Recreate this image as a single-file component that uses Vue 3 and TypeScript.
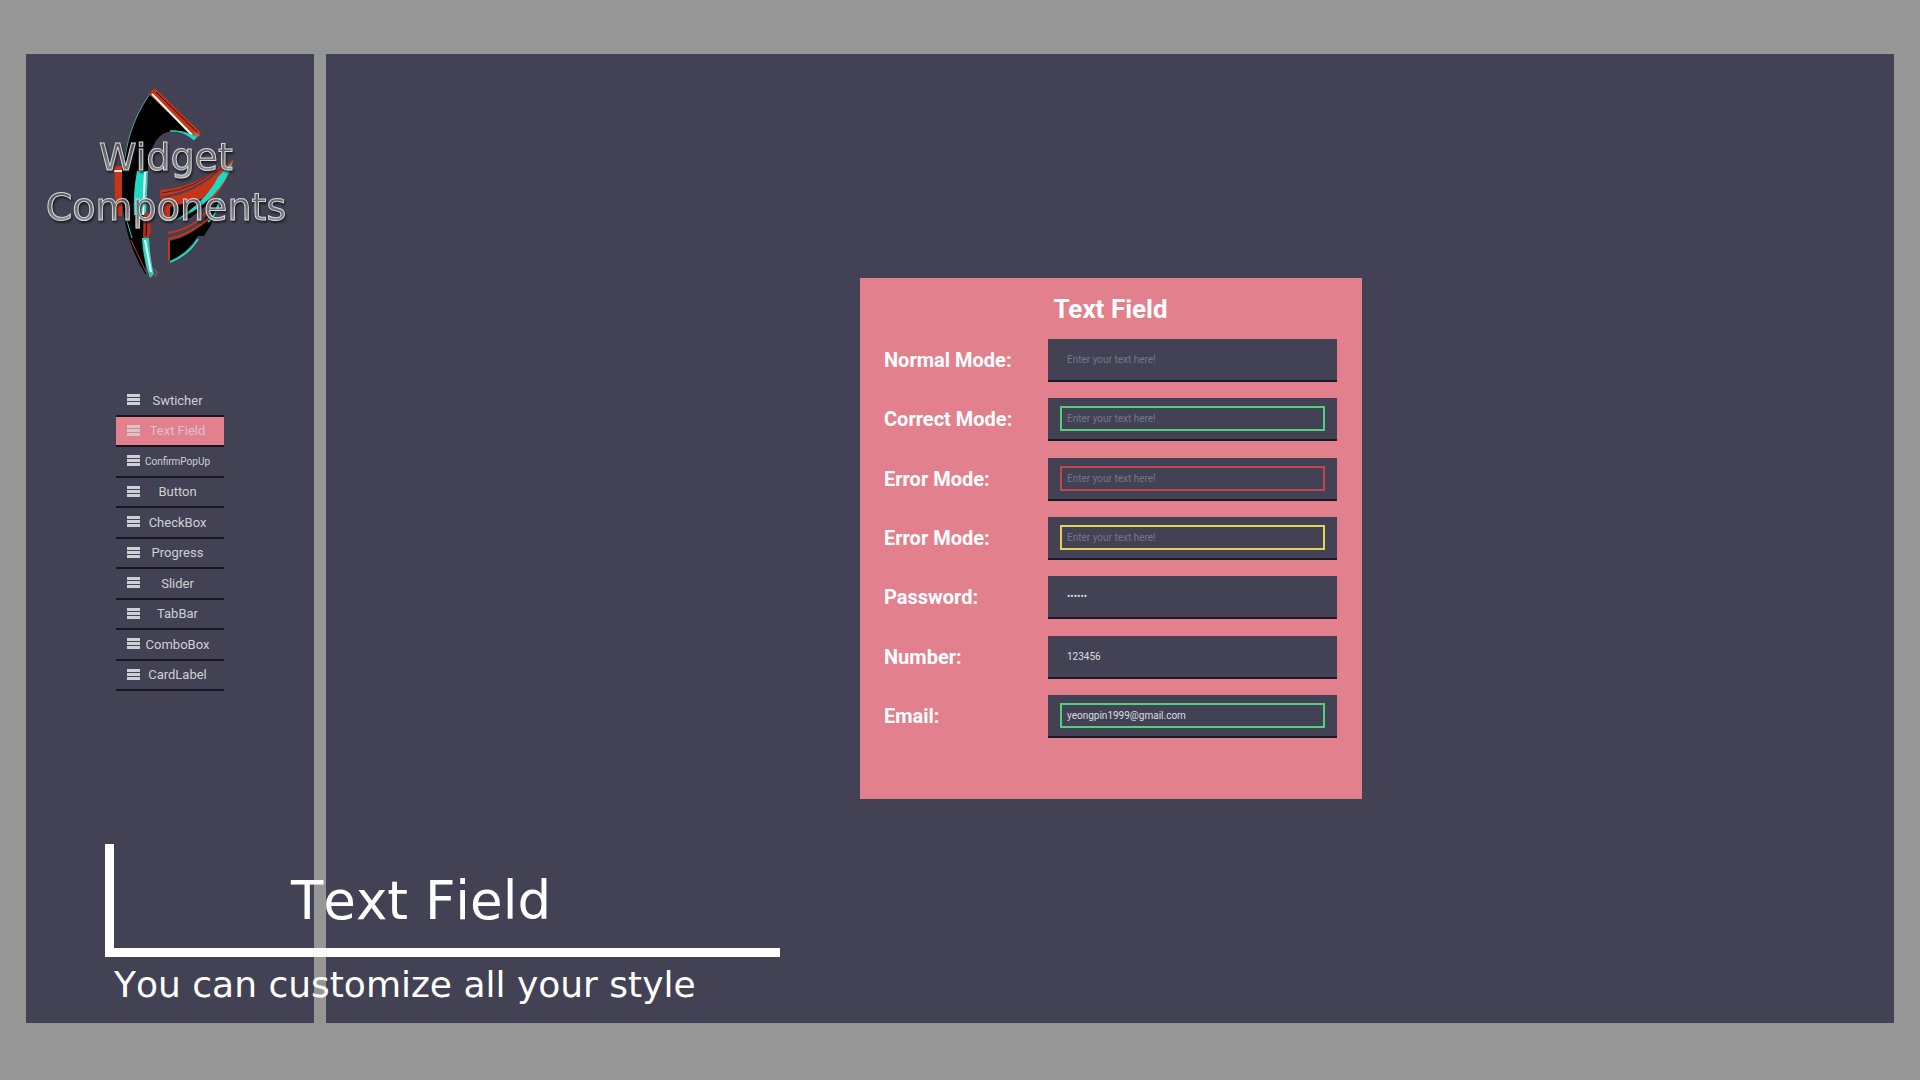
<script setup lang="ts">
interface NavItem { label: string; small?: boolean }
interface Field { id: string; label: string; type: string; value?: string; mode?: string }

const active = 'Text Field'

const items: NavItem[] = [
  { label: 'Swticher' },
  { label: 'Text Field' },
  { label: 'ConfirmPopUp', small: true },
  { label: 'Button' },
  { label: 'CheckBox' },
  { label: 'Progress' },
  { label: 'Slider' },
  { label: 'TabBar' },
  { label: 'ComboBox' },
  { label: 'CardLabel' },
]

const fields: Field[] = [
  { id: 'normal', label: 'Normal Mode:', type: 'text' },
  { id: 'correct', label: 'Correct Mode:', type: 'text', mode: 'correct' },
  { id: 'error', label: 'Error Mode:', type: 'text', mode: 'error' },
  { id: 'warning', label: 'Error Mode:', type: 'text', mode: 'warning' },
  { id: 'password', label: 'Password:', type: 'password', value: '123456' },
  { id: 'number', label: 'Number:', type: 'text', value: '123456' },
  { id: 'email', label: 'Email:', type: 'email', value: 'yeongpin1999@gmail.com', mode: 'correct' },
]
</script>

<template>
  <div class="page">
    <aside class="sidebar">
      <svg class="logo" viewBox="0 0 300 230" role="img" aria-label="Widget Components">
        <defs>
          <linearGradient id="metal" x1="0" y1="0" x2="0" y2="1">
            <stop offset="0" stop-color="#5c5c62" />
            <stop offset="0.5" stop-color="#85858a" />
            <stop offset="1" stop-color="#d8d8d8" />
          </linearGradient>
        </defs>
        <!-- upper blade -->
        <path d="M132 21C116 42 102 78 102 112C101 150 110 180 126 205L123 150L128 101C128 80 137 64 148 62C160 60 168 66 174 68L176 60Z" fill="#000" />
        <path d="M133 20C117 40 108 65 105 88" fill="none" stroke="#4fa79b" stroke-width="1" />
        <path d="M135 18L181 63L176 69L129 24Z" fill="#c83418" />
        <path d="M136 22L177 62" stroke="#1a0805" stroke-width="1" />
        <path d="M132 24L172 65" stroke="#fff" stroke-width="2" />
        <path d="M173 62L180 65L176 68Z" fill="#8c8072" />
        <path d="M150 61Q163 60 174 70L176 67Q163 60 150 61Z" stroke="#20d8c4" stroke-width="1" fill="#20d8c4" />
        <path d="M94 96H102V146H98L95 128Z" fill="#c83418" />
        <path d="M94 101H102" stroke="#eee" stroke-width="2" />
        <path d="M117 101H128L126 145H114Q113 122 117 101Z" fill="#20d8c4" />
        <path d="M125 102L123 145" stroke="#fff" stroke-width="2" />
        <path d="M126 142L130 143L131 162L128 168H123L124 145Z" fill="#b5311c" />
        <path d="M127 146L126 166" stroke="#180604" stroke-width="1" />
        <path d="M122 168L129 168Q130 190 134 204L130 208Q123 190 122 168Z" fill="#20d8c4" />
        <path d="M125 170L131 202" stroke="#fff" stroke-width="2" />
        <path d="M111 170L126 202" stroke="#b9412f" stroke-width="1" fill="none" />
        <path d="M106 148L112 168" stroke="#20d8c4" stroke-width="1" />
        <path d="M129 202L132 207M134 199L137 202L135 207" fill="none" stroke="#a86c5e" stroke-width="1" />
        <!-- middle feather -->
        <path d="M140 120Q175 117 196 98L212 92Q206 124 170 147H143Z" fill="#c83418" />
        <path d="M150 137L182 129L192 119L186 136L170 148H150Z" fill="#000" />
        <path d="M142 127Q176 123 202 97" fill="none" stroke="#424254" stroke-width="2" />
        <path d="M142 123Q176 119 198 97" fill="none" stroke="#501b18" stroke-width="1" />
        <path d="M213 91Q203 130 151 153Q186 132 198 107Z" fill="#20d8c4" />
        <path d="M209 95L211 92L213 90" stroke="#c83418" stroke-width="2" />
        <!-- lower feather -->
        <path d="M149 171Q176 166 187 145L200 127Q198 146 184 166H178Q168 182 149 192Z" fill="#000" />
        <path d="M148 163Q176 158 188 139M149 169Q172 164 189 148M149 168V191" fill="none" stroke="#c83418" stroke-width="2" />
        <path d="M200 128Q197 145 188 152M178 169Q168 185 150 192" fill="none" stroke="#20d8c4" stroke-width="2" />
        <g class="wordmark" fill="url(#metal)">
          <text x="146" y="100">Widget</text>
          <text x="146" y="150">Components</text>
        </g>
      </svg>
      <nav class="menu" aria-label="Widgets">
        <button
          v-for="item in items"
          :key="item.label"
          type="button"
          class="item"
          :class="{ active: item.label === active, small: item.small }"
        >
          <svg class="bars" viewBox="0 0 13 12" aria-hidden="true">
            <path d="M0 0H13V3H0ZM0 4H13V7H0ZM0 8H13V11H0Z" fill="currentColor" />
          </svg>
          <span class="name">{{ item.label }}</span>
        </button>
      </nav>
    </aside>

    <main class="stage">
      <form class="card" @submit.prevent>
        <h1 class="title">Text Field</h1>
        <div class="rows">
          <div v-for="f in fields" :key="f.id" class="row">
            <label :for="f.id">{{ f.label }}</label>
            <div class="field">
              <input :id="f.id" :type="f.type" :value="f.value" :class="f.mode" placeholder="Enter your text here!" />
            </div>
          </div>
        </div>
      </form>
    </main>

    <section class="caption">
      <h2>Text Field</h2>
      <p>You can customize all your style</p>
    </section>
  </div>
</template>

<style>
body {
  background: #969697;
}
</style>

<style scoped>
.page {
  position: relative;
  box-sizing: border-box;
  min-height: 100vh;
  padding: 54px 26px 57px;
  display: flex;
  gap: 12px;
  background: #969697;
  font-family: Roboto, "Liberation Sans", sans-serif;
}
.sidebar {
  flex: 0 0 288px;
  display: flex;
  flex-direction: column;
  align-items: center;
  background: #424254;
}
.logo {
  width: 300px;
  height: 230px;
  margin: 16px -6px 86px;
}
.wordmark {
  font-family: "DejaVu Sans", sans-serif;
  font-size: 38px;
  font-weight: 400;
  text-anchor: middle;
  stroke: #d8d8d8;
  stroke-width: 1px;
  fill-opacity: 0.7;
  filter: drop-shadow(1px 2px 1px #17171f);
}
.menu {
  width: 108px;
  height: 305px;
  display: flex;
  flex-direction: column;
}
.item {
  flex: 1;
  display: flex;
  align-items: center;
  padding: 0 0 0 11px;
  border: 0;
  border-bottom: 2px solid #171722;
  background: none;
  color: #d0d0d6;
  font-family: inherit;
  font-size: 13px;
}
.item.active {
  background: #e2808e;
  color: #dcc3cb;
}
.item.small {
  font-size: 10px;
}
.bars {
  flex: none;
  width: 13px;
  height: 12px;
}
.name {
  flex: 1;
  padding-right: 9px;
  text-align: center;
  white-space: nowrap;
}
.stage {
  flex: 1;
  display: flex;
  align-items: center;
  justify-content: center;
  padding-left: 2px;
  background: #424254;
}
.card {
  box-sizing: border-box;
  width: 502px;
  padding: 15px 25px 61px 24px;
  background: #e2808e;
  color: #fff;
}
.title {
  margin: 0 0 14px;
  font-size: 26px;
  line-height: 32px;
  text-align: center;
}
.rows {
  height: 399px;
  display: flex;
  flex-direction: column;
  justify-content: space-between;
}
.row {
  display: flex;
  align-items: center;
  justify-content: space-between;
}
.row label {
  padding-bottom: 1px;
  font-size: 20px;
  font-weight: 700;
  line-height: 24px;
}
.field {
  box-sizing: border-box;
  width: 289px;
  height: 43px;
  padding: 8px 12px;
  border-bottom: 2px solid #1d1825;
  background: #424254;
}
.field input {
  box-sizing: border-box;
  display: block;
  width: 100%;
  height: 25px;
  padding: 0 5px;
  border: 2px solid transparent;
  outline: none;
  background: none;
  color: #dcdce0;
  font-family: inherit;
  font-size: 10px;
}
.field input::placeholder {
  color: #777784;
  opacity: 1;
}
.field input.correct {
  border-color: #55cf7b;
}
.field input.error {
  border-color: #bd4850;
}
.field input.warning {
  border-color: #e0d454;
}
.caption {
  position: absolute;
  left: 105px;
  bottom: 70px;
  color: #fff;
  font-family: "DejaVu Sans", sans-serif;
  font-kerning: none;
}
.caption h2 {
  box-sizing: border-box;
  width: 675px;
  height: 113px;
  margin: 0;
  padding: 22px 52px 0 0;
  border-left: 9px solid #fff;
  border-bottom: 9px solid #fff;
  font-size: 53px;
  font-weight: 400;
  line-height: 70px;
  text-align: center;
}
.caption p {
  margin: 4px 0 1px 9px;
  font-size: 36px;
  line-height: 48px;
}
</style>
